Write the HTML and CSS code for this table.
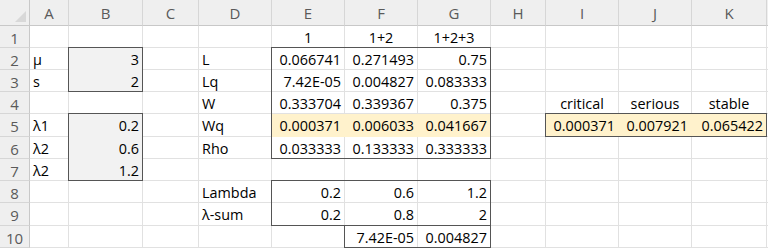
FILE: index.html
```html
<!DOCTYPE html>
<html>
<head>
<meta charset="utf-8">
<link rel="stylesheet" href="styles.css">
</head>
<body>
<div class="wrap">
  <div class="sheet">
    <div class="corner"><span class="tri"></span></div>
    <div class="ch">A</div><div class="ch">B</div><div class="ch">C</div><div class="ch">D</div><div class="ch">E</div><div class="ch">F</div><div class="ch">G</div><div class="ch">H</div><div class="ch">I</div><div class="ch">J</div><div class="ch">K</div><div class="ch"></div>

    <div class="rh">1</div>
    <div class="c"></div><div class="c"></div><div class="c"></div><div class="c"></div><div class="c m">1</div><div class="c m">1+2</div><div class="c m">1+2+3</div><div class="c"></div><div class="c"></div><div class="c"></div><div class="c"></div><div class="c"></div>

    <div class="rh">2</div>
    <div class="c">μ</div><div class="c r g">3</div><div class="c"></div><div class="c">L</div><div class="c r">0.066741</div><div class="c r">0.271493</div><div class="c r">0.75</div><div class="c"></div><div class="c"></div><div class="c"></div><div class="c"></div><div class="c"></div>

    <div class="rh">3</div>
    <div class="c">s</div><div class="c r g">2</div><div class="c"></div><div class="c">Lq</div><div class="c r">7.42E-05</div><div class="c r">0.004827</div><div class="c r">0.083333</div><div class="c"></div><div class="c"></div><div class="c"></div><div class="c"></div><div class="c"></div>

    <div class="rh">4</div>
    <div class="c"></div><div class="c"></div><div class="c"></div><div class="c">W</div><div class="c r">0.333704</div><div class="c r">0.339367</div><div class="c r">0.375</div><div class="c"></div><div class="c m">critical</div><div class="c m">serious</div><div class="c m">stable</div><div class="c"></div>

    <div class="rh">5</div>
    <div class="c">λ1</div><div class="c r g">0.2</div><div class="c"></div><div class="c">Wq</div><div class="c r y">0.000371</div><div class="c r y">0.006033</div><div class="c r y">0.041667</div><div class="c"></div><div class="c r y">0.000371</div><div class="c r y">0.007921</div><div class="c r y">0.065422</div><div class="c"></div>

    <div class="rh">6</div>
    <div class="c">λ2</div><div class="c r g">0.6</div><div class="c"></div><div class="c">Rho</div><div class="c r">0.033333</div><div class="c r">0.133333</div><div class="c r">0.333333</div><div class="c"></div><div class="c"></div><div class="c"></div><div class="c"></div><div class="c"></div>

    <div class="rh">7</div>
    <div class="c">λ2</div><div class="c r g">1.2</div><div class="c"></div><div class="c"></div><div class="c"></div><div class="c"></div><div class="c"></div><div class="c"></div><div class="c"></div><div class="c"></div><div class="c"></div><div class="c"></div>

    <div class="rh">8</div>
    <div class="c"></div><div class="c"></div><div class="c"></div><div class="c">Lambda</div><div class="c r">0.2</div><div class="c r">0.6</div><div class="c r">1.2</div><div class="c"></div><div class="c"></div><div class="c"></div><div class="c"></div><div class="c"></div>

    <div class="rh">9</div>
    <div class="c"></div><div class="c"></div><div class="c"></div><div class="c">λ-sum</div><div class="c r">0.2</div><div class="c r">0.8</div><div class="c r">2</div><div class="c"></div><div class="c"></div><div class="c"></div><div class="c"></div><div class="c"></div>

    <div class="rh">10</div>
    <div class="c"></div><div class="c"></div><div class="c"></div><div class="c"></div><div class="c"></div><div class="c r">7.42E-05</div><div class="c r">0.004827</div><div class="c"></div><div class="c"></div><div class="c"></div><div class="c"></div><div class="c"></div>
  </div>

  <div class="borders">
    <div class="box b-mu"></div>
    <div class="box b-lam"></div>
    <div class="box b-res"></div>
    <div class="box b-crit"></div>
    <div class="box b-sum"></div>
    <div class="box b-last"></div>
  </div>
</div>
</body>
</html>
```

FILE: styles.css
```css
html, body {
  margin: 0;
  padding: 0;
  background: #ffffff;
}

.wrap {
  display: grid;
  width: 768px;
  height: 252px;
  overflow: hidden;
}

.sheet,
.borders {
  grid-area: 1 / 1;
  display: grid;
  grid-template-columns: 30px 39px 74px 56px 73px 73px 73px 73px 55px 73px 73px 75px 1fr;
  grid-template-rows: 26px 22px 22px 22px 22px 23px 22px 22px 22px 23px 22px;
}

.borders {
  pointer-events: none;
}

.sheet > div {
  box-sizing: border-box;
  font-family: "Open Sans", "Noto Sans", sans-serif;
  font-size: 14.4px;
  white-space: nowrap;
  overflow: visible;
}

.corner {
  background: #efefef;
  border-right: 1px solid #c8c8c8;
  border-bottom: 1px solid #c8c8c8;
  display: flex;
  justify-content: flex-end;
  align-items: flex-end;
  padding: 0 3px 3px 0;
}

.tri {
  display: block;
  width: 0;
  height: 0;
  border-left: 11px solid transparent;
  border-bottom: 11px solid #d8d8d8;
}

.sheet > .ch {
  background: #efefef;
  color: #5a5a5a;
  border-right: 1px solid #d6d6d6;
  border-bottom: 1px solid #c8c8c8;
  text-align: center;
  line-height: 27px;
  font-size: 15px;
}

.sheet > .rh {
  background: #efefef;
  color: #5a5a5a;
  border-right: 1px solid #c8c8c8;
  border-bottom: 1px solid #d6d6d6;
  text-align: center;
  line-height: 22px;
  padding-top: 1px;
  font-size: 15px;
}

.c {
  color: #000000;
  border-right: 1px solid #e1e1e1;
  border-bottom: 1px solid #e1e1e1;
  padding: 1px 3px 0 3px;
  line-height: 21px;
}

.r {
  text-align: right;
}

.m {
  text-align: center;
}

.g {
  background: #f2f2f2;
  border-color: #f2f2f2;
}

.y {
  background: #fff2cc;
  border-color: #fff2cc;
}

.box {
  border: 1px solid #555555;
  margin: -1px 0 0 -1px;
}

.b-mu { grid-column: 3 / 4; grid-row: 3 / 5; }
.b-lam { grid-column: 3 / 4; grid-row: 6 / 9; }
.b-res { grid-column: 6 / 9; grid-row: 3 / 8; }
.b-crit { grid-column: 10 / 13; grid-row: 6 / 7; }
.b-sum { grid-column: 6 / 9; grid-row: 9 / 11; }
.b-last { grid-column: 7 / 9; grid-row: 11 / 12; }
```
